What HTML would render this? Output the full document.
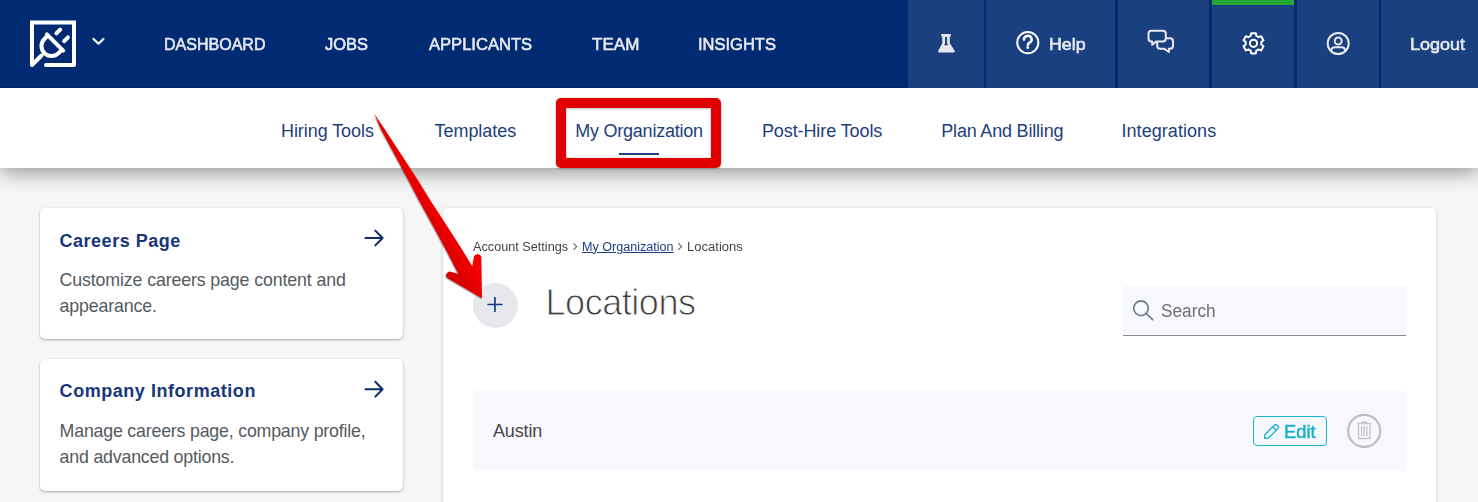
<!DOCTYPE html>
<html><head><meta charset="utf-8">
<style>
*{margin:0;padding:0;box-sizing:border-box}
html,body{width:1478px;height:502px;overflow:hidden;background:#f6f6f6;font-family:"Liberation Sans",sans-serif}
.a{position:absolute;white-space:nowrap}
#top{position:absolute;left:0;top:0;width:1478px;height:88px;background:#002b73}
#topR{position:absolute;left:908px;top:0;width:570px;height:88px;background:#1b4080}
.sep{position:absolute;top:0;height:88px;background:#002b73}
#sub{position:absolute;left:0;top:88px;width:1478px;height:80px;background:#fff;box-shadow:0 5px 18px rgba(0,0,0,.38)}
.card{position:absolute;left:40px;width:363px;background:#fff;border-radius:5px;box-shadow:0 1px 2.5px rgba(0,0,0,.3),0 0 1px rgba(0,0,0,.08)}
#panel{position:absolute;left:443px;top:208px;width:993px;height:320px;background:#fff;border-radius:5px;box-shadow:0 1px 4px rgba(0,0,0,.2)}
svg{position:absolute;left:0;top:0;overflow:visible}
</style></head><body>
<div id="sub"></div>
<div id="top"></div>
<div id="topR"></div>
<div class="sep" style="left:984px;width:2px"></div>
<div class="sep" style="left:1115px;width:3px"></div>
<div class="sep" style="left:1209px;width:3px"></div>
<div class="sep" style="left:1294px;width:3px"></div>
<div class="sep" style="left:1379px;width:2px"></div>
<div class="a" style="left:1212px;top:0;width:82px;height:5px;background:#23a834"></div>
<div class="a" style="left:0;top:87px;width:908px;height:1px;background:#001f5e"></div>

<div class="a" style="left:619px;top:153px;width:40px;height:2px;background:#1d3e7d"></div>

<div class="card" style="top:208px;height:131px"></div>
<div class="card" style="top:359px;height:132px"></div>

<div id="panel"></div>
<div class="a" style="left:473px;top:283px;width:45px;height:45px;border-radius:50%;background:#e7e8ed"></div>
<div class="a" style="left:1123px;top:286px;width:283px;height:50px;background:#f7f8fd;border-bottom:1px solid #8a8a8a"></div>
<div class="a" style="left:473px;top:391px;width:933px;height:80px;background:#f7f8fd"></div>
<div class="a" style="left:1253px;top:416px;width:74px;height:30px;border:1px solid #1ab3cb;border-radius:4px"></div>

<div class="a" style="left:163.77px;top:35.70px;font-size:17.2px;line-height:17.2px;color:#e7e9ee;letter-spacing:0.000px;-webkit-text-stroke:0.6px #e7e9ee;transform:scaleX(0.9324);transform-origin:0 0;">DASHBOARD</div>
<div class="a" style="left:325.40px;top:35.70px;font-size:17.2px;line-height:17.2px;color:#e7e9ee;letter-spacing:0.000px;-webkit-text-stroke:0.6px #e7e9ee;transform:scaleX(0.9578);transform-origin:0 0;">JOBS</div>
<div class="a" style="left:428.80px;top:35.70px;font-size:17.2px;line-height:17.2px;color:#e7e9ee;letter-spacing:0.000px;-webkit-text-stroke:0.6px #e7e9ee;transform:scaleX(0.9636);transform-origin:0 0;">APPLICANTS</div>
<div class="a" style="left:592.20px;top:35.70px;font-size:17.2px;line-height:17.2px;color:#e7e9ee;letter-spacing:0.000px;-webkit-text-stroke:0.6px #e7e9ee;transform:scaleX(0.9915);transform-origin:0 0;">TEAM</div>
<div class="a" style="left:698.44px;top:35.70px;font-size:17.2px;line-height:17.2px;color:#e7e9ee;letter-spacing:0.000px;-webkit-text-stroke:0.6px #e7e9ee;transform:scaleX(0.9600);transform-origin:0 0;">INSIGHTS</div>
<div class="a" style="left:1048.56px;top:35.60px;font-size:17.2px;line-height:17.2px;color:#e7e9ee;letter-spacing:0.000px;-webkit-text-stroke:0.6px #e7e9ee;transform:scaleX(1.0353);transform-origin:0 0;">Help</div>
<div class="a" style="left:1410.45px;top:35.80px;font-size:17.2px;line-height:17.2px;color:#e7e9ee;letter-spacing:0.000px;-webkit-text-stroke:0.6px #e7e9ee;transform:scaleX(1.0462);transform-origin:0 0;">Logout</div>
<div class="a" style="left:281.00px;top:122.10px;font-size:18px;line-height:18px;color:#1d3e7d;letter-spacing:-0.073px;">Hiring Tools</div>
<div class="a" style="left:434.50px;top:122.10px;font-size:18px;line-height:18px;color:#1d3e7d;letter-spacing:-0.038px;">Templates</div>
<div class="a" style="left:575.30px;top:122.10px;font-size:18px;line-height:18px;color:#1d3e7d;letter-spacing:-0.243px;">My Organization</div>
<div class="a" style="left:761.90px;top:122.10px;font-size:18px;line-height:18px;color:#1d3e7d;letter-spacing:-0.093px;">Post-Hire Tools</div>
<div class="a" style="left:941.30px;top:122.10px;font-size:18px;line-height:18px;color:#1d3e7d;letter-spacing:-0.193px;">Plan And Billing</div>
<div class="a" style="left:1121.50px;top:122.10px;font-size:18px;line-height:18px;color:#1d3e7d;letter-spacing:0.055px;">Integrations</div>
<div class="a" style="left:59.50px;top:231.50px;font-size:18px;line-height:18px;color:#173679;letter-spacing:0.518px;font-weight:700;">Careers Page</div>
<div class="a" style="left:59.50px;top:272.20px;font-size:17.8px;line-height:17.8px;color:#555a60;letter-spacing:-0.130px;">Customize careers page content and</div>
<div class="a" style="left:59.50px;top:298.10px;font-size:17.8px;line-height:17.8px;color:#555a60;letter-spacing:-0.130px;">appearance.</div>
<div class="a" style="left:59.60px;top:381.50px;font-size:18px;line-height:18px;color:#173679;letter-spacing:0.544px;font-weight:700;">Company Information</div>
<div class="a" style="left:59.60px;top:423.20px;font-size:17.8px;line-height:17.8px;color:#555a60;letter-spacing:-0.203px;">Manage careers page, company profile,</div>
<div class="a" style="left:59.60px;top:448.80px;font-size:17.8px;line-height:17.8px;color:#555a60;letter-spacing:-0.203px;">and advanced options.</div>
<div class="a" style="left:472.70px;top:240.90px;font-size:12.5px;line-height:12.5px;color:#454545;letter-spacing:0.000px;transform:scaleX(1.0140);transform-origin:0 0;">Account Settings</div>
<div class="a" style="left:581.59px;top:240.90px;font-size:12.5px;line-height:12.5px;color:#1d3e7d;letter-spacing:0.000px;text-decoration:underline;transform:scaleX(1.0067);transform-origin:0 0;">My Organization</div>
<div class="a" style="left:686.76px;top:240.90px;font-size:12.5px;line-height:12.5px;color:#454545;letter-spacing:0.000px;transform:scaleX(1.0442);transform-origin:0 0;">Locations</div>
<div class="a" style="left:545.50px;top:285.30px;font-size:36px;line-height:36px;color:#3d3d3d;letter-spacing:-0.450px;-webkit-text-stroke:0.9px #fff;">Locations</div>
<div class="a" style="left:1161.44px;top:302.10px;font-size:18px;line-height:18px;color:#6f6f6f;letter-spacing:0.000px;transform:scaleX(0.9582);transform-origin:0 0;">Search</div>
<div class="a" style="left:492.90px;top:422.20px;font-size:18px;line-height:18px;color:#474747;letter-spacing:-0.120px;">Austin</div>
<div class="a" style="left:1284.38px;top:422.50px;font-size:18px;line-height:18px;color:#1ab3cb;letter-spacing:0.000px;-webkit-text-stroke:0.5px #1ab3cb;transform:scaleX(1.0167);transform-origin:0 0;">Edit</div>

<svg width="1478" height="502" viewBox="0 0 1478 502">
 <!-- logo -->
 <g fill="none" stroke="#fff" stroke-width="4">
  <path d="M74 65 V22.6 H32 V65" stroke-linejoin="miter"/>
  <path d="M46 65 H74" stroke-linecap="round"/>
  <path d="M32 65 L41.5 55.5" stroke-linecap="round"/>
  <g transform="translate(55 42.5) rotate(45)" stroke-linecap="round">
   <path d="M-11.5 0 H11.5 M-10 0 V5 A10 10 0 0 0 10 5 V0"/>
   <path d="M-5.5 -7.5 V-12.8 M5.5 -7.5 V-12.8"/>
  </g>
 </g>
 <path d="M93.5 39 L98.5 43.8 L103.4 39" fill="none" stroke="#fff" stroke-width="2.2" stroke-linecap="round" stroke-linejoin="round"/>

 <!-- flask -->
 <path fill="#e5e6eb" d="M941.3 34.1 H950.8 V36.6 H949.8 V43.3 L954.4 50.2 Q955.6 52.6 952.8 52.6 H940.1 Q937.3 52.6 938.5 50.2 L942.3 43.3 V36.6 H941.3 Z"/>
 <path fill="#1b4080" d="M945.1 37 H947.1 V43.6 L948.3 45.2 H943.9 L945.1 43.6 Z"/>
 <!-- help -->
 <circle cx="1027.8" cy="42.6" r="10.6" fill="none" stroke="#fff" stroke-width="2"/>
 <path d="M1024 39.6 A3.8 3.6 0 1 1 1029.6 42.6 Q1027.8 43.6 1027.8 45" fill="none" stroke="#fff" stroke-width="2.5" stroke-linecap="round"/>
 <circle cx="1027.7" cy="47.6" r="1.45" fill="#fff"/>
 <!-- chat -->
 <g fill="none" stroke="#e8e9ee" stroke-width="2" stroke-linejoin="round">
  <path d="M1151.5 30.7 H1162.8 Q1165.8 30.7 1165.8 33.7 V38.4 Q1165.8 41.4 1162.8 41.4 H1156.5 L1152.2 44.8 V41.4 H1151.5 Q1148.5 41.4 1148.5 38.4 V33.7 Q1148.5 30.7 1151.5 30.7 Z"/>
  <path d="M1165.8 38.2 H1170 Q1173 38.2 1173 41.2 V45.7 Q1173 48.7 1170 48.7 H1168.9 V52 L1164 48.7 H1160.2 Q1157.2 48.7 1157.2 45.7 V41.4"/>
 </g>
 <!-- gear -->
 <g fill="none" stroke="#fff" stroke-width="2" stroke-linejoin="round">
  <path d="M1249.55 36.46 L1250.67 35.92 L1251.16 33.17 L1255.84 33.17 L1256.33 35.92 L1257.45 36.46 L1258.47 37.16 L1261.11 36.21 L1263.45 40.26 L1261.30 42.06 L1261.40 43.30 L1261.30 44.54 L1263.45 46.34 L1261.11 50.39 L1258.47 49.44 L1257.45 50.14 L1256.33 50.68 L1255.84 53.43 L1251.16 53.43 L1250.67 50.68 L1249.55 50.14 L1248.53 49.44 L1245.89 50.39 L1243.55 46.34 L1245.70 44.54 L1245.60 43.30 L1245.70 42.06 L1243.55 40.26 L1245.89 36.21 L1248.53 37.16 Z"/>
  <circle cx="1253.5" cy="43.3" r="3.6"/>
 </g>
 <!-- user -->
 <g fill="none" stroke="#e8e9ee" stroke-width="2">
  <circle cx="1338.2" cy="43.5" r="10.5"/>
  <circle cx="1338.2" cy="41" r="3.5"/>
  <path d="M1331.2 50.8 Q1331.5 47.3 1335 47.3 H1341.4 Q1344.9 47.3 1345.2 50.8"/>
 </g>

 <path d="M573.4 243.4 L576.7 246.6 L573.4 249.8" fill="none" stroke="#666" stroke-width="1.1"/>
 <path d="M678.3 243.4 L681.6 246.6 L678.3 249.8" fill="none" stroke="#666" stroke-width="1.1"/>
 <g fill="none" stroke="#0b2b6c" stroke-width="2" stroke-linecap="round" stroke-linejoin="round">
  <path d="M365.5 238 H382.5 M375.3 230.6 L382.6 238 L375.3 245.4"/>
  <path d="M365.5 389.2 H382.5 M375.3 381.8 L382.6 389.2 L375.3 396.6"/>
 </g>
 <!-- plus -->
 <path d="M487.4 304.5 H502.6 M494.9 297 V312" stroke="#163a82" stroke-width="1.7"/>
 <!-- search icon -->
 <g fill="none" stroke="#76808b" stroke-width="1.8">
  <circle cx="1141" cy="308.3" r="7.3"/>
  <path d="M1146.3 313.6 L1152.6 319.6" stroke-linecap="round"/>
 </g>
 <!-- pencil -->
 <g fill="none" stroke="#1ab3cb" stroke-width="1.3" stroke-linejoin="round">
  <path d="M1264.5 438.3 L1265 434.5 L1274.5 425 Q1275.6 424 1276.8 425 L1278 426.2 Q1279 427.4 1278 428.5 L1268.5 438 Z M1272.8 426.8 L1276.3 430.3"/>
 </g>
 <!-- trash circle -->
 <circle cx="1364.2" cy="430.9" r="16" fill="none" stroke="#bdbdbd" stroke-width="2.2"/>
 <g fill="none" stroke="#c4c4c4" stroke-width="1.3">
  <path d="M1357 423.5 H1371.5 M1362 423.5 V422 H1366.5 V423.5 M1358.5 424 V438.5 H1370 V424 M1361.6 426 V436 M1364.2 426 V436 M1366.8 426 V436"/>
 </g>

 <!-- red box -->
 <path d="M561 103 H716 V163 H561 Z" fill="none" stroke="#e00000" stroke-width="10" stroke-linejoin="round" filter="url(#sh)"/>
 <defs>
  <filter id="sh" x="-20%" y="-20%" width="140%" height="140%">
   <feDropShadow dx="0" dy="0.5" stdDeviation="0.8" flood-color="#000" flood-opacity="0.35"/>
  </filter>
  <linearGradient id="ag" gradientUnits="userSpaceOnUse" x1="437.4" y1="242" x2="454.6" y2="232">
   <stop offset="0" stop-color="#d60000"/>
   <stop offset="0.55" stop-color="#e80000"/>
   <stop offset="1" stop-color="#f60000"/>
  </linearGradient>
  <filter id="sh2" x="-20%" y="-20%" width="140%" height="140%">
   <feDropShadow dx="-0.6" dy="1" stdDeviation="0.7" flood-color="#000" flood-opacity="0.4"/>
  </filter>
 </defs>
 <!-- arrow -->
 <path filter="url(#sh2)" fill="url(#ag)" d="M374.5 114 L385.3 130 L417.9 180 L430.1 200 L446.4 225 L462.4 250 L472.4 266.4 L473.9 258 A3.7 3.7 0 0 1 481.3 258 L482 298.3 L447.4 278.1 A3.8 3.8 0 0 1 451.6 271.9 L458.4 273.9 L446 250 L432.5 225 L418.7 200 L408.3 180 L381.2 130 Z"/>
</svg>
</body></html>
